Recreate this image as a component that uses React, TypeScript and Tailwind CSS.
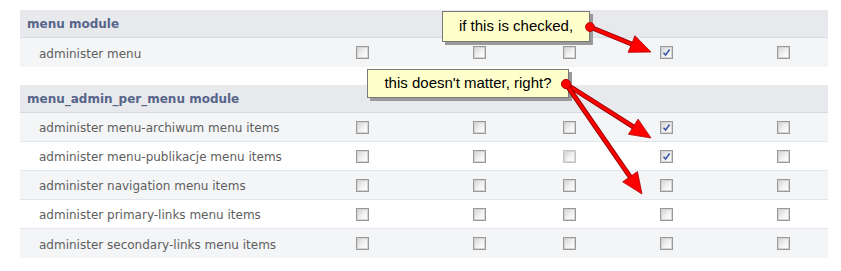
import React from 'react'

type Row = { label: string; checked: boolean[]; faded?: number }
type Section = { title: string; rows: Row[] }

const sections: Section[] = [
  {
    title: 'menu module',
    rows: [{ label: 'administer menu', checked: [false, false, false, true, false] }],
  },
  {
    title: 'menu_admin_per_menu module',
    rows: [
      { label: 'administer menu-archiwum menu items', checked: [false, false, false, true, false] },
      { label: 'administer menu-publikacje menu items', checked: [false, false, false, true, false], faded: 2 },
      { label: 'administer navigation menu items', checked: [false, false, false, false, false] },
      { label: 'administer primary-links menu items', checked: [false, false, false, false, false] },
      { label: 'administer secondary-links menu items', checked: [false, false, false, false, false] },
    ],
  },
]

const grid = 'grid grid-cols-[336px_117px_90px_97px_117px_1fr] items-center'

function Box({ checked, faded }: { checked: boolean; faded?: boolean }) {
  return (
    <div
      className={
        'w-[13px] h-[13px] border ' +
        (faded ? 'border-[#c4c4c4]' : 'border-[#999999]')
      }
    >
      <div className="w-full h-full border border-[#d4d4d4] bg-gradient-to-br from-[#d6d6d6] via-[#f0f0f0] to-white flex items-center justify-center">
        {checked && (
          <svg width="9" height="9" viewBox="0 0 9 9">
            <path d="M1.5 4.8 L3.6 7 L7.6 1.6" fill="none" stroke="#3b57a6" strokeWidth="1.6" />
          </svg>
        )}
      </div>
    </div>
  )
}

function Arrow({ x1, y1, x2, y2 }: { x1: number; y1: number; x2: number; y2: number }) {
  const dx = x2 - x1
  const dy = y2 - y1
  const len = Math.hypot(dx, dy)
  const ux = dx / len
  const uy = dy / len
  const L = 21
  const W = 9
  const bx = x2 - ux * L
  const by = y2 - uy * L
  const pts = `${x2},${y2} ${bx - uy * W},${by + ux * W} ${bx + uy * W},${by - ux * W}`
  return (
    <g>
      <line x1={x1} y1={y1} x2={bx + ux * 2} y2={by + uy * 2} stroke="#9a0000" strokeWidth="5" />
      <line x1={x1} y1={y1} x2={bx + ux * 2} y2={by + uy * 2} stroke="#ff0000" strokeWidth="3" />
      <polygon points={pts} fill="#ff0000" stroke="#b00000" strokeWidth="0.8" />
      <circle cx={x1} cy={y1} r="4.5" fill="#ff0000" stroke="#b00000" strokeWidth="0.8" />
    </g>
  )
}

export default function App() {
  return (
    <div className="relative w-[841px] h-[271px] bg-white overflow-hidden font-['DejaVu_Sans',Verdana,sans-serif]">
      <div className="ml-[20px] w-[808px] pt-[10px] flex flex-col gap-[18px]">
        {sections.map((s) => (
          <div key={s.title}>
            <div className="h-[28px] bg-[#e8e9ed] border-b border-[#d5dae4] flex items-center pl-[7px] text-[12px] font-bold text-[#56658a]">
              {s.title}
            </div>
            {s.rows.map((r, i) => (
              <div
                key={r.label}
                className={
                  grid +
                  ' h-[29px] text-[12px] text-[#5e5e5e] ' +
                  (i % 2 === 0 ? 'bg-[#f4f5f7]' : 'bg-white') +
                  (i < s.rows.length - 1 ? ' border-b border-[#e3e7ed]' : '')
                }
              >
                <div className="pl-[19px] pt-[2px]">{r.label}</div>
                {r.checked.map((c, j) => (
                  <div key={j}>
                    <Box checked={c} faded={r.faded === j} />
                  </div>
                ))}
              </div>
            ))}
          </div>
        ))}
      </div>

      <div className="absolute left-[442px] top-[11px] w-[148px] h-[31px] bg-[#ffffcc] border border-[#7a7a7a] shadow-[3px_3px_0_#9a9a9a] flex items-center justify-center text-[15px] text-black font-['Liberation_Sans',Arial,sans-serif]">
        if this is checked,
      </div>
      <div className="absolute left-[367px] top-[69px] w-[202px] h-[29px] bg-[#ffffcc] border border-[#7a7a7a] shadow-[3px_3px_0_#9a9a9a] flex items-center justify-center text-[15px] text-black font-['Liberation_Sans',Arial,sans-serif]">
        this doesn't matter, right?
      </div>

      <svg className="absolute inset-0 pointer-events-none" width="841" height="271">
        <Arrow x1={590} y1={27} x2={651} y2={52} />
        <Arrow x1={566} y1={84} x2={651} y2={138} />
        <Arrow x1={566} y1={84} x2={642} y2={194} />
      </svg>
    </div>
  )
}
